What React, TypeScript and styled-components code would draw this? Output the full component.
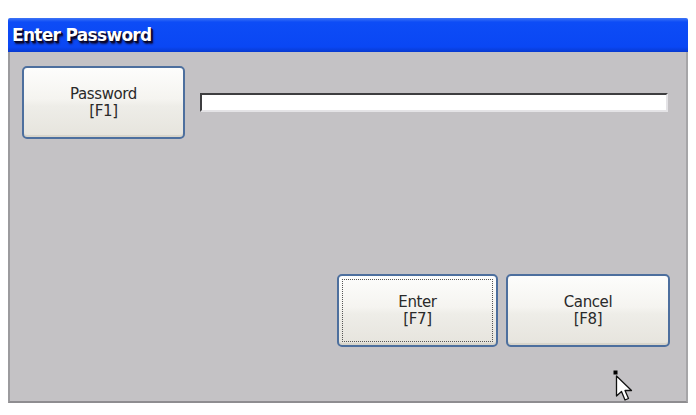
import styled, { createGlobalStyle } from 'styled-components';

const GlobalStyle = createGlobalStyle`
  html, body {
    margin: 0;
    background: #ffffff;
  }
  body {
    font-family: 'DejaVu Sans', 'Liberation Sans', sans-serif;
  }
`;

const Page = styled.div`
  padding: 18px 0 0 8px;
`;

const Window = styled.div`
  position: relative;
  width: 680px;
  height: 385px;
  display: flex;
  flex-direction: column;
`;

const TitleBar = styled.div`
  height: 34px;
  flex: none;
  display: flex;
  align-items: center;
  padding-left: 4px;
  background: linear-gradient(
    to bottom,
    #3d74f6 0%,
    #0d4cf6 12%,
    #0a47f4 85%,
    #0839d0 100%
  );
  border-top-left-radius: 2px;
  border-top-right-radius: 2px;
`;

const Title = styled.span`
  color: #ffffff;
  font-family: 'DejaVu Sans', sans-serif;
  font-weight: bold;
  font-size: 17px;
  letter-spacing: -0.7px;
  text-shadow: 1px 1px 0 #06062a, 2px 2px 0 #0b0b38, 2px 3px 2px #101040;
`;

const Body = styled.div`
  flex: 1;
  display: flex;
  flex-direction: column;
  background: #c4c2c5;
  border-left: 2px solid #9c9b9e;
  border-right: 2px solid #a6a5a8;
  border-bottom: 2px solid #8e8d90;
  padding: 14px 16px 54px 12px;
`;

const Row = styled.div<{ $end?: boolean }>`
  display: flex;
  align-items: center;
  justify-content: ${(p) => (p.$end ? 'flex-end' : 'flex-start')};
  gap: ${(p) => (p.$end ? '8px' : '15px')};
`;

const Spacer = styled.div`
  flex: 1;
`;

const KeyButton = styled.button<{ $w: number }>`
  position: relative;
  width: ${(p) => p.$w}px;
  height: 73px;
  flex: none;
  display: flex;
  flex-direction: column;
  align-items: center;
  justify-content: center;
  padding: 0;
  border: 2px solid #4d6f9e;
  border-radius: 5px;
  background: linear-gradient(to bottom, #fdfdfc 0%, #f5f4f0 45%, #eeede8 55%, #e6e4dd 100%);
  box-shadow: inset 0 -2px 0 #d8d5cb;
  color: #2a2a2a;
  font-family: 'DejaVu Sans', 'Liberation Sans', sans-serif;
  font-size: 15px;
  line-height: 17px;
  letter-spacing: -0.4px;
`;

const FocusRing = styled.span`
  position: absolute;
  inset: 3px;
  border: 1px dotted #555555;
  pointer-events: none;
`;

const Field = styled.div`
  flex: 1;
  height: 15px;
  margin-right: 2px;
  background: #ffffff;
  border-top: 2px solid #3e3e40;
  border-left: 2px solid #3e3e40;
  border-bottom: 2px solid #e4e3e6;
  border-right: 2px solid #e4e3e6;
`;

const Pointer = styled.svg`
  position: absolute;
  left: 604px;
  top: 351px;
`;

function Cursor() {
  return (
    <Pointer width="26" height="34" viewBox="0 0 26 34">
      <rect x="1.5" y="1.5" width="4" height="4" fill="#000" />
      <path
        d="M4.5 7 L4.5 27 L9.5 22.5 L13 31 L16.5 29.5 L13 21.5 L19.5 21.5 Z"
        fill="#ffffff"
        stroke="#111111"
        strokeWidth="1.3"
        strokeLinejoin="round"
      />
    </Pointer>
  );
}

export default function App() {
  return (
    <>
      <GlobalStyle />
      <Page>
        <Window>
          <TitleBar>
            <Title>Enter Password</Title>
          </TitleBar>
          <Body>
            <Row>
              <KeyButton $w={163}>
                <span>Password</span>
                <span>[F1]</span>
              </KeyButton>
              <Field />
            </Row>
            <Spacer />
            <Row $end>
              <KeyButton $w={161}>
                <FocusRing />
                <span>Enter</span>
                <span>[F7]</span>
              </KeyButton>
              <KeyButton $w={164}>
                <span>Cancel</span>
                <span>[F8]</span>
              </KeyButton>
            </Row>
          </Body>
          <Cursor />
        </Window>
      </Page>
    </>
  );
}
